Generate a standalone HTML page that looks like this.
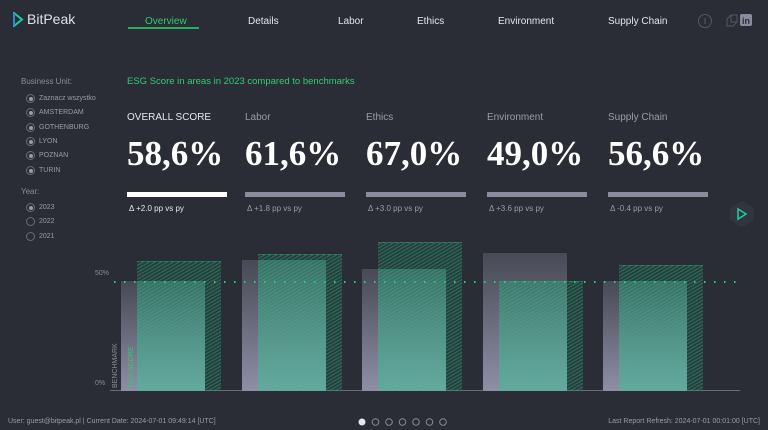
<!DOCTYPE html>
<html><head><meta charset="utf-8"><style>
*{margin:0;padding:0;box-sizing:border-box}
body{width:768px;height:430px;background:#2b2d36;font-family:"Liberation Sans",sans-serif;color:#c8c9d0;position:relative;overflow:hidden}
.a{position:absolute;white-space:nowrap}
.nav{top:16px;font-size:10px;color:#e6e6ea}
.rad{font-size:7px;color:#9a9ba6;display:flex;align-items:center;gap:4px}
.rad i{width:9px;height:9px;border-radius:50%;border:1px solid #6a6b76;display:inline-block;position:relative}
.rad i.on::after{content:"";position:absolute;left:1.5px;top:1.5px;width:4px;height:4px;border-radius:50%;background:#9a9ba6}
.tt{top:112px;font-size:10px;color:#9a9ba6}
.num{top:134px;font-family:"Liberation Serif",serif;font-weight:bold;font-size:35px;color:#fff}
.bar{top:192px;width:100px;height:5px;background:#8a8b9c}
.d{top:204px;font-size:8px;color:#9a9ba6}
.bm{background:linear-gradient(#474955,#8e8fa6)}
.es{background:repeating-linear-gradient(-30deg,rgba(40,170,120,.5) 0 1.2px,rgba(30,120,90,.2) 1.2px 3px);border-top:1px solid rgba(40,170,120,.4)}
.ov{background:linear-gradient(rgba(60,160,140,.35),rgba(120,200,190,.6))}
</style></head><body>
<div class="a" style="left:12px;top:11px;font-size:14px;color:#e0e0e6;display:flex;align-items:center;gap:3px">
<svg width="12" height="15" viewBox="0 0 12 15"><path d="M2 1 L10 7.5 L2 14 Z" fill="none" stroke="#1fc8a0" stroke-width="2"/><path d="M2 1 V14" stroke="#2a8ad0" stroke-width="2"/></svg>BitPeak</div>
<div class="a nav" style="left:145px;color:#2ecc71">Overview</div>
<div class="a" style="left:128px;top:27px;width:71px;height:2px;background:#27ae60"></div>
<div class="a nav" style="left:248px">Details</div>
<div class="a nav" style="left:338px">Labor</div>
<div class="a nav" style="left:417px">Ethics</div>
<div class="a nav" style="left:498px">Environment</div>
<div class="a nav" style="left:608px">Supply Chain</div>
<svg class="a" style="left:697px;top:12px" width="60" height="18"><circle cx="8" cy="9" r="6.5" fill="none" stroke="#555766" stroke-width="1"/><line x1="8" y1="6" x2="8" y2="12" stroke="#555766"/><path d="M30 7 L34 3 H40 V10 L36 14 H30 Z M34 3 V10 H40" fill="none" stroke="#555766"/><rect x="43" y="2" width="12" height="12" rx="2" fill="#8a8b9c"/><text x="45" y="12" font-size="9" font-weight="bold" fill="#2b2d36" font-family="Liberation Sans">in</text></svg>

<div class="a" style="left:21px;top:77px;font-size:8px;color:#8a8b96">Business Unit:</div>
<div class="a rad" style="left:26px;top:94px"><i class="on"></i>Zaznacz wszystko</div>
<div class="a rad" style="left:26px;top:108px"><i class="on"></i>AMSTERDAM</div>
<div class="a rad" style="left:26px;top:123px"><i class="on"></i>GOTHENBURG</div>
<div class="a rad" style="left:26px;top:137px"><i class="on"></i>LYON</div>
<div class="a rad" style="left:26px;top:151px"><i class="on"></i>POZNAN</div>
<div class="a rad" style="left:26px;top:166px"><i class="on"></i>TURIN</div>
<div class="a" style="left:21px;top:187px;font-size:8px;color:#8a8b96">Year:</div>
<div class="a rad" style="left:26px;top:203px"><i class="on"></i>2023</div>
<div class="a rad" style="left:26px;top:217px"><i></i>2022</div>
<div class="a rad" style="left:26px;top:232px"><i></i>2021</div>

<div class="a" style="left:127px;top:76px;font-size:9.5px;color:#2ecc71">ESG Score in areas in 2023 compared to benchmarks</div>

<div class="a tt" style="left:127px;color:#e6e6ea">OVERALL SCORE</div>
<div class="a tt" style="left:245px">Labor</div>
<div class="a tt" style="left:366px">Ethics</div>
<div class="a tt" style="left:487px">Environment</div>
<div class="a tt" style="left:608px">Supply Chain</div>
<div class="a num" style="left:127px">58,6%</div>
<div class="a num" style="left:245px">61,6%</div>
<div class="a num" style="left:366px">67,0%</div>
<div class="a num" style="left:487px">49,0%</div>
<div class="a num" style="left:608px">56,6%</div>
<div class="a bar" style="left:127px;background:#fff"></div>
<div class="a bar" style="left:245px"></div>
<div class="a bar" style="left:366px"></div>
<div class="a bar" style="left:487px"></div>
<div class="a bar" style="left:608px"></div>
<div class="a d" style="left:129px;color:#e6e6ea">Δ +2.0 pp vs py</div>
<div class="a d" style="left:247px">Δ +1.8 pp vs py</div>
<div class="a d" style="left:368px">Δ +3.0 pp vs py</div>
<div class="a d" style="left:489px">Δ +3.6 pp vs py</div>
<div class="a d" style="left:610px">Δ -0.4 pp vs py</div>
<svg class="a" style="left:728px;top:200px" width="28" height="28"><polygon points="14,1 26,8 26,20 14,27 2,20 2,8" fill="#32343f"/><path d="M10 9 L18 14 L10 19 Z" fill="none" stroke="#1fc8a0" stroke-width="1.6"/></svg>

<div class="a" style="left:95px;top:270px;font-size:7px;color:#8a8b96">50%</div>
<div class="a" style="left:95px;top:380px;font-size:7px;color:#8a8b96">0%</div>
<div class="a" style="left:110px;top:390px;width:630px;height:1px;background:#6a6b76"></div>

<div class="a bm" style="left:121px;top:281px;width:84px;height:110px"></div>
<div class="a ov" style="left:137px;top:281px;width:68px;height:110px"></div>
<div class="a es" style="left:137px;top:261px;width:84px;height:130px"></div>
<div class="a bm" style="left:242px;top:260px;width:84px;height:131px"></div>
<div class="a ov" style="left:258px;top:260px;width:68px;height:131px"></div>
<div class="a es" style="left:258px;top:254px;width:84px;height:137px"></div>
<div class="a bm" style="left:362px;top:269px;width:84px;height:122px"></div>
<div class="a ov" style="left:378px;top:269px;width:68px;height:122px"></div>
<div class="a es" style="left:378px;top:242px;width:84px;height:149px"></div>
<div class="a bm" style="left:483px;top:253px;width:84px;height:138px"></div>
<div class="a ov" style="left:499px;top:281px;width:68px;height:110px"></div>
<div class="a es" style="left:499px;top:281px;width:84px;height:110px"></div>
<div class="a bm" style="left:603px;top:281px;width:84px;height:110px"></div>
<div class="a ov" style="left:619px;top:281px;width:68px;height:110px"></div>
<div class="a es" style="left:619px;top:265px;width:84px;height:126px"></div>

<div class="a" style="left:114px;top:281px;width:630px;height:2px;background:repeating-linear-gradient(90deg,#2ecc71 0 1.5px,transparent 1.5px 10px)"></div>
<div class="a" style="left:112px;top:388px;font-size:7px;color:#8a8b96;transform:rotate(-90deg);transform-origin:0 0">BENCHMARK</div>
<div class="a" style="left:128px;top:388px;font-size:7px;color:#2ecc71;transform:rotate(-90deg);transform-origin:0 0">ESG SCORE</div>

<div class="a" style="left:8px;top:418px;font-size:7px;color:#9a9ba6">User: guest@bitpeak.pl | Current Date: 2024-07-01 09:49:14 [UTC]</div>
<div class="a" style="right:8px;top:418px;font-size:7px;color:#9a9ba6">Last Report Refresh: 2024-07-01 00:01:00 [UTC]</div>
<svg class="a" style="left:357px;top:417px" width="92" height="10"><circle cx="5" cy="5" r="3.5" fill="#e6e6ea"/><g fill="none" stroke="#8a8b96"><circle cx="18.5" cy="5" r="3.3"/><circle cx="32" cy="5" r="3.3"/><circle cx="45.5" cy="5" r="3.3"/><circle cx="59" cy="5" r="3.3"/><circle cx="72.5" cy="5" r="3.3"/><circle cx="86" cy="5" r="3.3"/></g></svg>
</body></html>
